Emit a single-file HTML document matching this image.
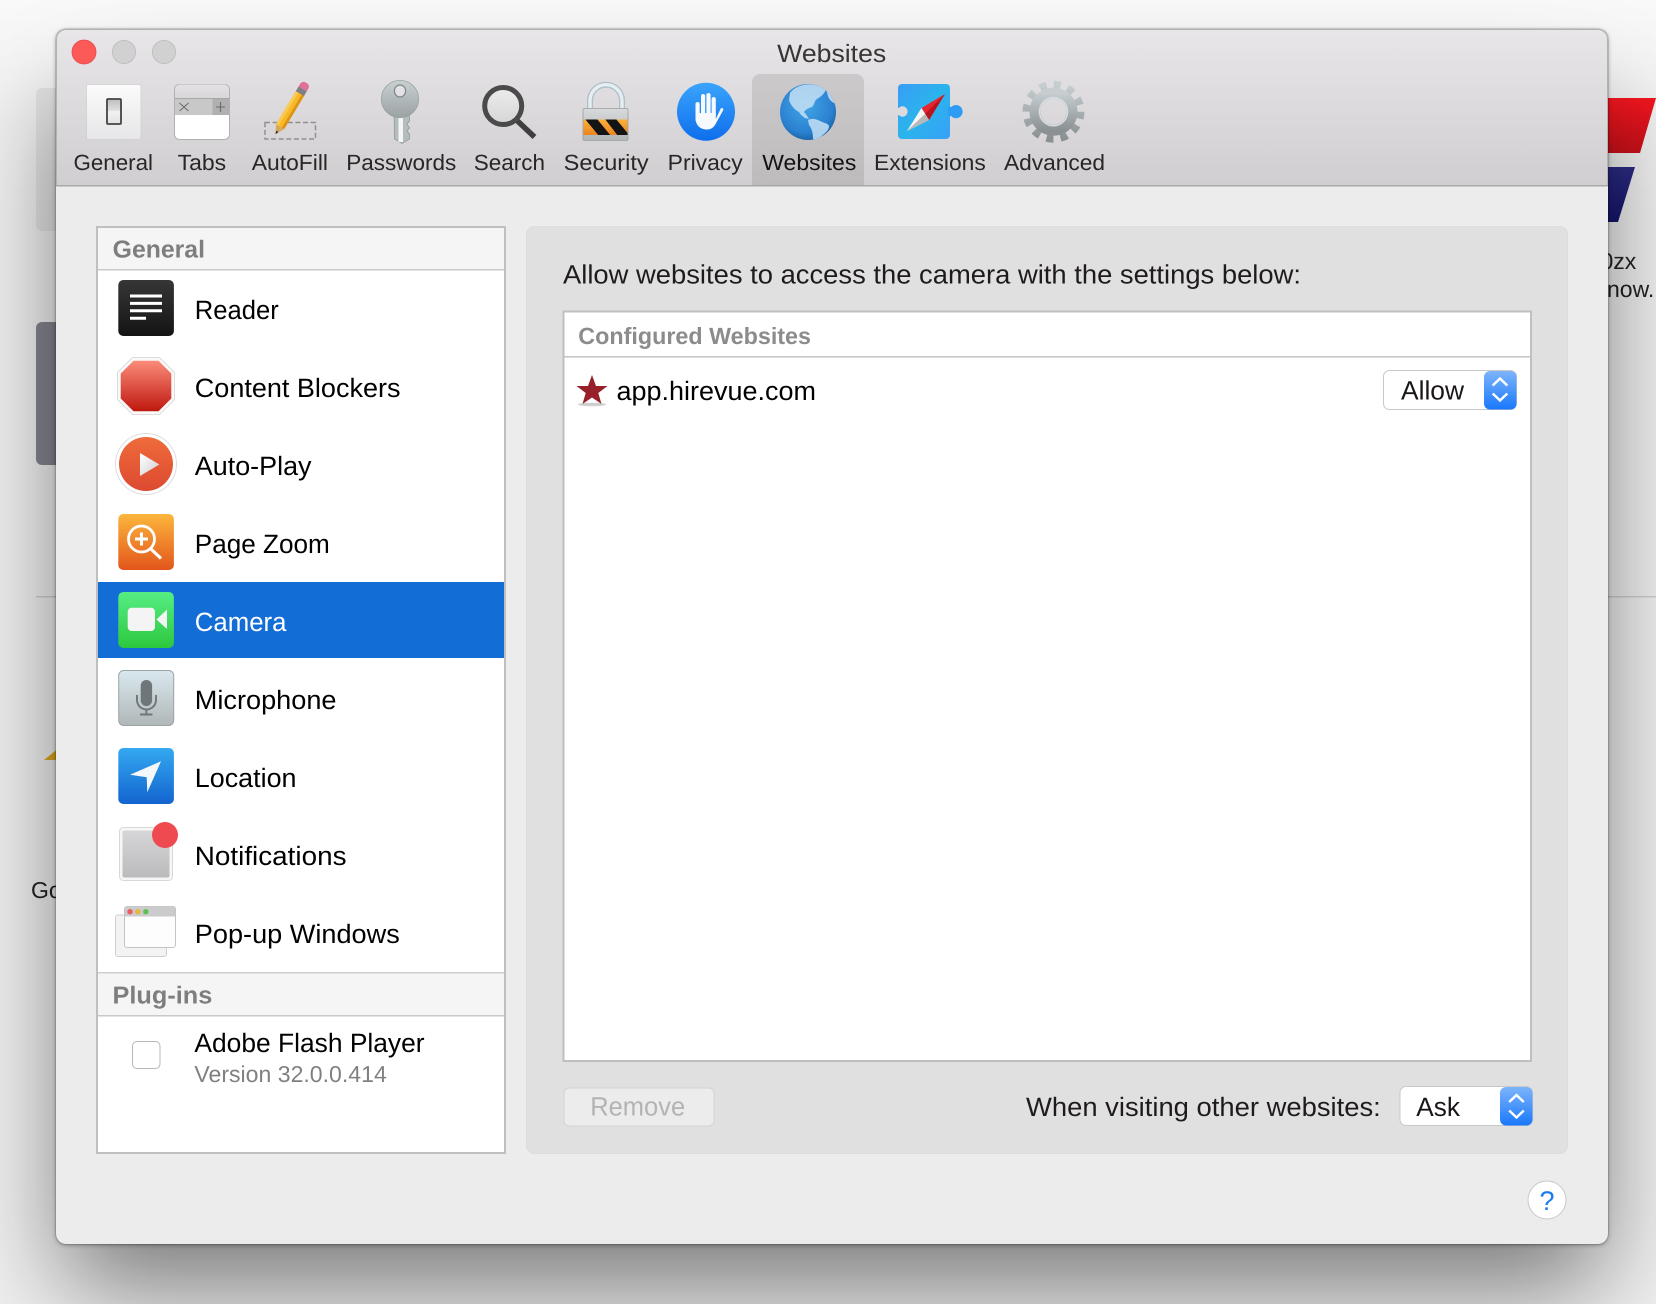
<!DOCTYPE html>
<html><head><meta charset="utf-8"><title>Websites</title>
<style>
html,body{margin:0;padding:0;width:1656px;height:1304px;overflow:hidden;background:linear-gradient(#f9f9f9,#f1f1f1 120px);}
svg{position:absolute;left:0;top:0;}
svg text{font-family:"Liberation Sans",sans-serif;text-rendering:geometricPrecision;}
#clip{position:absolute;left:0;top:0;width:1656px;height:1304px;overflow:hidden;}
#sh{position:absolute;left:62px;top:110px;width:1540px;height:1178px;background:rgba(0,0,0,.5);filter:blur(52px);}
#win{position:absolute;left:56px;top:29px;width:1552px;height:1215px;box-sizing:border-box;border-radius:10px;background:#ececec;
box-shadow:0 1px 4px rgba(0,0,0,.35),0 0 1px rgba(0,0,0,.7);}
</style></head><body>
<svg width="1656" height="1304" viewBox="0 0 1656 1304">
<defs>
<linearGradient id="rd" x1="0" y1="0" x2="0" y2="1"><stop offset="0" stop-color="#f4161f"/><stop offset="1" stop-color="#c8101a"/></linearGradient>
<linearGradient id="bd" x1="0" y1="0" x2="0" y2="1"><stop offset="0" stop-color="#2c2c85"/><stop offset="1" stop-color="#16166e"/></linearGradient>
</defs>
<rect x="36" y="88" width="40" height="143" rx="6" fill="#e4e4e4"/>
<rect x="36" y="322" width="40" height="143" rx="6" fill="#85858f"/>
<rect x="36" y="596" width="40" height="1.5" fill="#d0d0d0"/>
<rect x="1600" y="596" width="56" height="1.5" fill="#d0d0d0"/>
<polygon points="44,760 60,747 60,760" fill="#e0aa20"/>
<text x="31" y="898" font-size="23" fill="#222">Go</text>
<polygon points="1600,98 1656,98 1640,153 1600,153" fill="url(#rd)"/>
<polygon points="1600,167 1635,167 1618,222 1600,222" fill="url(#bd)"/>
<text x="1600.5" y="269" font-size="23" fill="#222">0zx</text>
<text x="1607" y="297" font-size="23" fill="#222">now.</text>
</svg>
<div id="clip"><div id="sh"></div></div>
<div id="win"></div>
<svg width="1656" height="1304" viewBox="0 0 1656 1304">
<defs>
<linearGradient id="tb" x1="0" y1="0" x2="0" y2="1"><stop offset="0" stop-color="#e8e6e8"/><stop offset="1" stop-color="#d0ced0"/></linearGradient>
<linearGradient id="sel" x1="0" y1="0" x2="0" y2="1"><stop offset="0" stop-color="#cbc9ca"/><stop offset="1" stop-color="#bdbbbc"/></linearGradient>
<linearGradient id="gen" x1="0" y1="0" x2="0" y2="1"><stop offset="0" stop-color="#fbfbfb"/><stop offset="1" stop-color="#e6e6e8"/></linearGradient>
<linearGradient id="sw" x1="0" y1="0" x2="0" y2="1"><stop offset="0" stop-color="#bdbdbd"/><stop offset=".45" stop-color="#dedede"/><stop offset=".5" stop-color="#f2f2f2"/><stop offset="1" stop-color="#e2e2e2"/></linearGradient>
<linearGradient id="tt" x1="0" y1="0" x2="0" y2="1"><stop offset="0" stop-color="#e4e2e4"/><stop offset="1" stop-color="#d8d6d8"/></linearGradient>
<linearGradient id="key" x1="0" y1="0" x2="0" y2="1"><stop offset="0" stop-color="#c8d0d2"/><stop offset="1" stop-color="#9aa2a4"/></linearGradient>
<linearGradient id="lens" x1="0" y1="0" x2="0" y2="1"><stop offset="0" stop-color="#ececec"/><stop offset="1" stop-color="#d6d6d6"/></linearGradient>
<linearGradient id="lb" x1="0" y1="0" x2="0" y2="1"><stop offset="0" stop-color="#d8dadb"/><stop offset="1" stop-color="#b0b4b6"/></linearGradient>
<linearGradient id="org" x1="0" y1="0" x2="0" y2="1"><stop offset="0" stop-color="#fbb03c"/><stop offset="1" stop-color="#ec8420"/></linearGradient>
<linearGradient id="pv" x1="0" y1="0" x2="0" y2="1"><stop offset="0" stop-color="#3aa4fc"/><stop offset="1" stop-color="#0e6eec"/></linearGradient>
<radialGradient id="gl" cx=".45" cy=".38" r=".68"><stop offset="0" stop-color="#44a6e8"/><stop offset=".72" stop-color="#2a80d0"/><stop offset="1" stop-color="#165a98"/></radialGradient>
<linearGradient id="px" x1="0" y1="0" x2="1" y2="1"><stop offset="0" stop-color="#3a9cf6"/><stop offset=".5" stop-color="#2ab4ec"/><stop offset="1" stop-color="#38a0f8"/></linearGradient>
<linearGradient id="gr" x1="0" y1="0" x2="0" y2="1"><stop offset="0" stop-color="#c6ced1"/><stop offset="1" stop-color="#8b9193"/></linearGradient>
<linearGradient id="rdr" x1="0" y1="0" x2="0" y2="1"><stop offset="0" stop-color="#363636"/><stop offset="1" stop-color="#141414"/></linearGradient>
<linearGradient id="stp" x1="0" y1="0" x2="0" y2="1"><stop offset="0" stop-color="#fb8c7a"/><stop offset="1" stop-color="#bf180e"/></linearGradient>
<linearGradient id="apl" x1="0" y1="0" x2="0" y2="1"><stop offset="0" stop-color="#ef6b3c"/><stop offset="1" stop-color="#dc4a30"/></linearGradient>
<linearGradient id="tri" x1="0" y1="0" x2="1" y2="1"><stop offset="0" stop-color="#ffffff"/><stop offset="1" stop-color="#d0d0d0"/></linearGradient>
<linearGradient id="pz" x1="0" y1="0" x2="0" y2="1"><stop offset="0" stop-color="#fcb63c"/><stop offset="1" stop-color="#e3551c"/></linearGradient>
<linearGradient id="cm" x1="0" y1="0" x2="0" y2="1"><stop offset="0" stop-color="#56ee84"/><stop offset="1" stop-color="#2dc73e"/></linearGradient>
<linearGradient id="mc" x1="0" y1="0" x2="0" y2="1"><stop offset="0" stop-color="#d9e8ee"/><stop offset="1" stop-color="#b0b7b8"/></linearGradient>
<linearGradient id="lc" x1="0" y1="0" x2="0" y2="1"><stop offset="0" stop-color="#34a9f1"/><stop offset="1" stop-color="#1364cf"/></linearGradient>
<linearGradient id="nt" x1="0" y1="0" x2="0" y2="1"><stop offset="0" stop-color="#d6d6d8"/><stop offset="1" stop-color="#bbbbbd"/></linearGradient>
<linearGradient id="chev" x1="0" y1="0" x2="0" y2="1"><stop offset="0" stop-color="#7fb6fb"/><stop offset="1" stop-color="#1877fb"/></linearGradient>
<clipPath id="stc"><rect x="583.5" y="119.5" width="44" height="15.5"/></clipPath>
<clipPath id="sa"><rect x="1484" y="371" width="32.5" height="38.5" rx="6"/></clipPath>
<clipPath id="sb"><rect x="1500" y="1087" width="32.5" height="38.5" rx="6"/></clipPath>
<clipPath id="glc"><circle cx="808" cy="112" r="28"/></clipPath>
</defs>

<!-- toolbar -->
<path d="M56 185V39a10 10 0 0 1 10-10H1598a10 10 0 0 1 10 10V185Z" fill="url(#tb)"/>
<path d="M56.5 185V39a9.5 9.5 0 0 1 9.5-9.5H1598a9.5 9.5 0 0 1 9.5 9.5V185" fill="none" stroke="#b2b2b2" stroke-width="1"/>
<rect x="56" y="185" width="1552" height="1.5" fill="#a9a9a9"/>
<path d="M752 185V82a8 8 0 0 1 8-8h96a8 8 0 0 1 8 8V185Z" fill="url(#sel)"/>

<circle cx="84" cy="52" r="12" fill="#fc5a58" stroke="#e5484a" stroke-width=".8"/>
<circle cx="124" cy="52" r="11.6" fill="#d2d1d2" stroke="#bcbbbc" stroke-width=".8"/>
<circle cx="164" cy="52" r="11.6" fill="#d2d1d2" stroke="#bcbbbc" stroke-width=".8"/>
<text x="777.2" y="62" font-size="25" fill="#3a3535" textLength="109" lengthAdjust="spacingAndGlyphs">Websites</text>

<!-- General icon -->
<rect x="86.5" y="84.5" width="54.5" height="55" rx="1.5" fill="url(#gen)" stroke="#d0d0d0" stroke-width=".8"/>
<rect x="107" y="99" width="14" height="25" rx="1" fill="url(#sw)" stroke="#444" stroke-width="1.8"/>
<!-- Tabs icon -->
<rect x="174.5" y="84.5" width="55" height="55" rx="5" fill="#fff" stroke="#b0b0b0" stroke-width="1"/>
<path d="M175 98.5V89.5a5 5 0 0 1 5-5h44a5 5 0 0 1 5 5V98.5Z" fill="url(#tt)"/>
<rect x="175" y="98.5" width="54" height="16.5" fill="#c9c8c9"/>
<rect x="212.5" y="98.5" width="16.5" height="16.5" fill="#b1b0b1"/>
<path d="M175 98.5H229" stroke="#9c9c9c" stroke-width=".8"/>
<path d="M179.5 103l9 8M188.5 103l-9 8M220.5 102v10M216 107h9" stroke="#6c6c6c" stroke-width="1.1" fill="none"/>
<!-- AutoFill -->
<rect x="265" y="122.5" width="50.5" height="16.5" fill="none" stroke="#8f8f8f" stroke-width="1.5" stroke-dasharray="5 2.6"/>
<g transform="translate(275.5 134.3) rotate(30.9)">
<polygon points="0,0 -4.8,-9 4.8,-9" fill="#d9a860"/>
<polygon points="0,0 -1.4,-3.5 1.4,-3.5" fill="#333"/>
<rect x="-4.8" y="-48" width="9.6" height="39" fill="#f8b928"/>
<rect x="-4.8" y="-48" width="3" height="39" fill="#f9cb53"/>
<rect x="2" y="-48" width="2.8" height="39" fill="#dd9416"/>
<rect x="-4.8" y="-53" width="9.6" height="5.5" fill="#7f7f84"/>
<path d="M-4.8 -53v-3a4 4 0 0 1 4 -4h1.6a4 4 0 0 1 4 4v3Z" fill="#e0709a"/>
</g>
<!-- Key -->
<path d="M394 110 H409.5 V121 L407 124 L409.5 128 L407 131 L409.5 134 V139 L402 143.5 L394.5 139Z" fill="#b5bcbe" stroke="#8e9496" stroke-width=".7"/>
<rect x="398.5" y="116" width="4.5" height="26" fill="#f4f6f6"/>
<ellipse cx="400" cy="99" rx="18.7" ry="18.7" fill="url(#key)" stroke="#959c9e" stroke-width=".7"/>
<ellipse cx="400" cy="91" rx="5.6" ry="6" fill="#e3e1e3" stroke="#7f8688" stroke-width="1.2"/>
<!-- Search -->
<path d="M517 120.5L534.5 137" stroke="#3f3f3f" stroke-width="5.5" fill="none"/>
<circle cx="503.2" cy="106" r="18.5" fill="url(#lens)" stroke="#4a4a4a" stroke-width="5"/>
<!-- Security -->
<path d="M590 110V100.7a16 16 0 0 1 32 0V110" fill="none" stroke="#aebfc8" stroke-width="6"/>
<path d="M590 110V100.7a16 16 0 0 1 32 0V110" fill="none" stroke="#e6eef2" stroke-width="3.4"/>
<rect x="583" y="108.5" width="45" height="32" rx="1.5" fill="url(#lb)" stroke="#9a9ea0" stroke-width=".8"/>
<rect x="583.5" y="119.5" width="44" height="15.5" fill="url(#org)"/>
<g clip-path="url(#stc)" fill="#141414"><polygon points="585,119 597,119 611,136 599,136"/><polygon points="605,119 616,119 630,136 618,136"/></g>
<!-- Privacy -->
<ellipse cx="706" cy="111.7" rx="29" ry="29" fill="url(#pv)"/>
<g fill="#fff" opacity=".96"><rect x="695.5" y="102" width="4.2" height="20" rx="2.1"/><rect x="701" y="94" width="4.2" height="24" rx="2.1"/><rect x="706.4" y="93" width="4.2" height="24" rx="2.1"/><rect x="711.6" y="97" width="4.2" height="20" rx="2.1"/>
<path d="M695.5 113H715.8V119L720.5 109C722 107 724 108.5 723 110.5L715 125C713 128 710.5 129.5 707 129.5C700 129.5 695.5 125 695.5 118Z"/></g>
<!-- Globe -->
<circle cx="808" cy="112" r="28" fill="url(#gl)"/>
<g clip-path="url(#glc)" fill="#bddcf3" opacity=".9">
<path d="M790 93C795 86 806 83 815 85L826 88C826 92 822 96 817 99 814 101 815 104 812 107 809 108 806 109 804 112 806 114 807 116 809 119L805 118C802 116 800 114 799 112 795 110 791 106 789 100Z"/>
<path d="M808 120C812 118 816 119 820 121 824 123 830 124 829 127 828 132 823 134 820 138 818 139 815 140 813 139 813 133 812 129 809 125Z"/>
<path d="M826 86C830 89 835 96 836 104 833 103 829 100 828 96 827 92 825 89 826 86Z"/>
</g>
<!-- Extensions -->
<circle cx="956" cy="111.6" r="6.6" fill="#2f9cf4"/>
<rect x="898" y="84" width="52" height="55" rx="4" fill="url(#px)"/>
<rect x="948" y="107" width="5" height="9" fill="#2f9cf4"/>
<circle cx="902.5" cy="111.5" r="5.2" fill="#dcdadc"/><rect x="897" y="108" width="5" height="7" fill="#dcdadc"/>
<polygon points="945,94 921.5,108 929,120" fill="#e6262e"/>
<polygon points="945,94 925,114 929,120" fill="#b8151c"/>
<polygon points="907,131 921.5,108 929,120" fill="#f6f6f6"/>
<polygon points="907,131 925,114 929,120" fill="#b8b8b8"/>
<!-- Advanced -->
<circle cx="1053.5" cy="111.7" r="27" fill="none" stroke="url(#gr)" stroke-width="8" stroke-dasharray="7 7.137"/>
<circle cx="1053.5" cy="111.7" r="18.5" fill="none" stroke="url(#gr)" stroke-width="11"/>
<circle cx="1053.5" cy="111.7" r="14" fill="none" stroke="#d8dee0" stroke-width="1.6"/>

<!-- toolbar labels -->
<g font-size="22" fill="#2a2626">
<text x="73.5" y="170" textLength="79.5" lengthAdjust="spacingAndGlyphs">General</text>
<text x="177.6" y="170" textLength="48.6" lengthAdjust="spacingAndGlyphs">Tabs</text>
<text x="251.8" y="170" textLength="76.2" lengthAdjust="spacingAndGlyphs">AutoFill</text>
<text x="346.3" y="170" textLength="110" lengthAdjust="spacingAndGlyphs">Passwords</text>
<text x="473.8" y="170" textLength="71.2" lengthAdjust="spacingAndGlyphs">Search</text>
<text x="563.7" y="170" textLength="85" lengthAdjust="spacingAndGlyphs">Security</text>
<text x="667.7" y="170" textLength="75" lengthAdjust="spacingAndGlyphs">Privacy</text>
<text x="762.3" y="170" textLength="94" lengthAdjust="spacingAndGlyphs" fill="#161212">Websites</text>
<text x="874" y="170" textLength="111.8" lengthAdjust="spacingAndGlyphs">Extensions</text>
<text x="1004" y="170" textLength="101" lengthAdjust="spacingAndGlyphs">Advanced</text>
</g>

<!-- left list -->
<rect x="97" y="227" width="408" height="926" fill="#fff" stroke="#bfbfbf" stroke-width="2"/>
<rect x="98" y="228" width="406" height="41" fill="#f5f5f5"/>
<rect x="98" y="269" width="406" height="1.5" fill="#c9c9c9"/>
<rect x="98" y="973" width="406" height="42" fill="#f5f5f5"/>
<rect x="98" y="972" width="406" height="1.5" fill="#cfcfcf"/>
<rect x="98" y="1015" width="406" height="1.5" fill="#c9c9c9"/>
<rect x="98" y="582" width="406" height="76" fill="#136dd6"/>

<text x="112.7" y="257.7" font-size="24.5" font-weight="bold" fill="#7e7e7e" textLength="92.3" lengthAdjust="spacingAndGlyphs">General</text>
<text x="112.5" y="1003.5" font-size="24.5" font-weight="bold" fill="#7e7e7e" textLength="99.8" lengthAdjust="spacingAndGlyphs">Plug-ins</text>

<g font-size="26.5" fill="#000">
<text x="194.8" y="319" textLength="84" lengthAdjust="spacingAndGlyphs">Reader</text>
<text x="194.8" y="397" textLength="205.7" lengthAdjust="spacingAndGlyphs">Content Blockers</text>
<text x="194.8" y="475" textLength="116.7" lengthAdjust="spacingAndGlyphs">Auto-Play</text>
<text x="194.8" y="553" textLength="135" lengthAdjust="spacingAndGlyphs">Page Zoom</text>
<text x="194.8" y="631" textLength="91.7" lengthAdjust="spacingAndGlyphs" fill="#fff">Camera</text>
<text x="194.8" y="709" textLength="141.7" lengthAdjust="spacingAndGlyphs">Microphone</text>
<text x="194.8" y="787" textLength="101.7" lengthAdjust="spacingAndGlyphs">Location</text>
<text x="194.8" y="865" textLength="151.7" lengthAdjust="spacingAndGlyphs">Notifications</text>
<text x="194.8" y="943" textLength="205" lengthAdjust="spacingAndGlyphs">Pop-up Windows</text>
<text x="194.4" y="1052" textLength="230.2" lengthAdjust="spacingAndGlyphs">Adobe Flash Player</text>
</g>
<text x="194.4" y="1082" font-size="23" fill="#808080" textLength="192.4" lengthAdjust="spacingAndGlyphs">Version 32.0.0.414</text>

<!-- reader -->
<rect x="118.3" y="280" width="55.6" height="56" rx="5" fill="url(#rdr)"/>
<path d="M130 296H162M130 303.4H162M130 310.8H162M130 318.2H146" stroke="#fff" stroke-width="3" fill="none"/>
<!-- stop -->
<polygon points="132.5,357.5 159.5,357.5 174.5,372.5 174.5,399.5 159.5,414.5 132.5,414.5 117.5,399.5 117.5,372.5" fill="#fafafa" stroke="#dcdcdc" stroke-width="1"/>
<polygon points="133.5,360.7 158.5,360.7 171.3,373.5 171.3,398.5 158.5,411.3 133.5,411.3 120.7,398.5 120.7,373.5" fill="url(#stp)"/>
<!-- autoplay -->
<circle cx="146" cy="464" r="30.5" fill="#fff" stroke="#dcdcdc" stroke-width="1"/>
<circle cx="146" cy="464" r="27" fill="url(#apl)"/>
<polygon points="140,453 159.3,464.5 140,476" fill="url(#tri)"/>
<!-- zoom -->
<rect x="118.3" y="514" width="55.6" height="56" rx="5" fill="url(#pz)"/>
<circle cx="141.5" cy="539" r="13" fill="none" stroke="#fff" stroke-width="2.8"/>
<path d="M151 549L161 558.5" stroke="#fff" stroke-width="3.2" fill="none"/>
<path d="M141.5 532.5V545.5M135 539H148" stroke="#fff" stroke-width="3" fill="none"/>
<!-- camera -->
<rect x="118.3" y="592" width="55.6" height="56" rx="5" fill="url(#cm)"/>
<rect x="127.7" y="607.7" width="27.3" height="23.3" rx="4" fill="#f4f4f4"/>
<polygon points="156.5,619.5 167,609.5 167,629" fill="#f4f4f4"/>
<!-- mic -->
<rect x="118.7" y="670.5" width="55" height="55" rx="5" fill="url(#mc)" stroke="#9ba3a5" stroke-width="1"/>
<rect x="140.7" y="680" width="11.4" height="26" rx="5.7" fill="#6f7679"/>
<path d="M137 695V700A9.5 9.5 0 0 0 156 700V695M146.4 709.5V714M140 714.5H152.5" stroke="#6f7679" stroke-width="1.9" fill="none"/>
<!-- location -->
<rect x="118.3" y="748" width="55.6" height="56" rx="5" fill="url(#lc)"/>
<polygon points="161,761.3 130,774.7 146.7,777.3 147.3,792.3" fill="#f5f8fb"/>
<!-- notifications -->
<rect x="119.5" y="827.5" width="53" height="53" rx="4" fill="#f6f6f6" stroke="#d8d8d8" stroke-width="1"/>
<rect x="122.5" y="830.5" width="47" height="47" rx="2" fill="url(#nt)"/>
<circle cx="165" cy="835" r="13" fill="#ee4a4f"/>
<!-- popups -->
<rect x="115.5" y="915" width="51" height="41.5" rx="2.5" fill="#f3f3f3" stroke="#cfcfcf" stroke-width="1"/>
<rect x="124.5" y="906.5" width="51" height="41" rx="2.5" fill="#fdfdfd" stroke="#c4c4c4" stroke-width="1"/>
<path d="M125 916.5V909a2.5 2.5 0 0 1 2.5-2.5h45a2.5 2.5 0 0 1 2.5 2.5V916.5Z" fill="#cbcbcb"/>
<circle cx="130" cy="911.7" r="2.7" fill="#e8605e"/><circle cx="137.8" cy="911.7" r="2.7" fill="#ecb440"/><circle cx="145.8" cy="911.7" r="2.7" fill="#5cc052"/>
<!-- checkbox -->
<rect x="132.5" y="1041.5" width="27.5" height="27" rx="4.5" fill="#fff" stroke="#b8b8b8" stroke-width="1"/>

<!-- right panel -->
<rect x="526.5" y="226.5" width="1041" height="927" rx="8" fill="#e0e0e0" stroke="#dcdcdc" stroke-width="1"/>
<text x="563" y="283.7" font-size="26.5" fill="#1f1b1b" textLength="738" lengthAdjust="spacingAndGlyphs">Allow websites to access the camera with the settings below:</text>
<rect x="563.5" y="311.5" width="967.5" height="749.5" fill="#fff" stroke="#bfbfbf" stroke-width="2"/>
<rect x="564.5" y="356" width="965.5" height="1.6" fill="#c6c6c6"/>
<text x="578.3" y="344" font-size="23.5" font-weight="bold" fill="#8c8c8c" textLength="232.7" lengthAdjust="spacingAndGlyphs">Configured Websites</text>
<ellipse cx="592" cy="404.5" rx="14" ry="1.8" fill="#cfcfcf"/>
<polygon points="592,375 596,386 607.5,386 598.3,393 601.5,404 592,397.5 582.5,404 585.7,393 576.5,386 588,386" fill="#97202a"/>
<text x="616.5" y="400" font-size="26.5" fill="#000" textLength="199.5" lengthAdjust="spacingAndGlyphs">app.hirevue.com</text>

<!-- Allow popup -->
<rect x="1383.5" y="370.5" width="133" height="39" rx="6" fill="#fff" stroke="#c8c8c8" stroke-width="1"/>
<rect x="1484" y="370" width="33" height="40" fill="url(#chev)" clip-path="url(#sa)"/>
<path d="M1492.7 385.5L1500 378.5L1507.3 385.5M1492.7 393.5L1500 400.5L1507.3 393.5" fill="none" stroke="#fff" stroke-width="2.4"/>
<text x="1401" y="399.5" font-size="26.5" fill="#1a1616" textLength="63" lengthAdjust="spacingAndGlyphs">Allow</text>

<!-- bottom -->
<rect x="564" y="1088" width="150" height="38" rx="5" fill="#ececec" stroke="#d2d2d2" stroke-width="1"/>
<text x="590.2" y="1115.3" font-size="26.5" fill="#b3b3b3" textLength="95" lengthAdjust="spacingAndGlyphs">Remove</text>
<text x="1026" y="1116" font-size="26.5" fill="#1f1b1b" textLength="354.8" lengthAdjust="spacingAndGlyphs">When visiting other websites:</text>
<rect x="1400" y="1086.5" width="132.5" height="39" rx="6" fill="#fff" stroke="#c8c8c8" stroke-width="1"/>
<rect x="1500" y="1086" width="33" height="40" fill="url(#chev)" clip-path="url(#sb)"/>
<path d="M1509.2 1102L1516.5 1095L1523.8 1102M1509.2 1110.5L1516.5 1117.5L1523.8 1110.5" fill="none" stroke="#fff" stroke-width="2.4"/>
<text x="1416.3" y="1116" font-size="26.5" fill="#1a1616" textLength="43.7" lengthAdjust="spacingAndGlyphs">Ask</text>

<!-- help -->
<circle cx="1547" cy="1200" r="19" fill="#fff" stroke="#c8c8c8" stroke-width="1"/>
<text x="1547" y="1210" font-size="27" fill="#1b7cf2" text-anchor="middle">?</text>
</svg>
</body></html>
